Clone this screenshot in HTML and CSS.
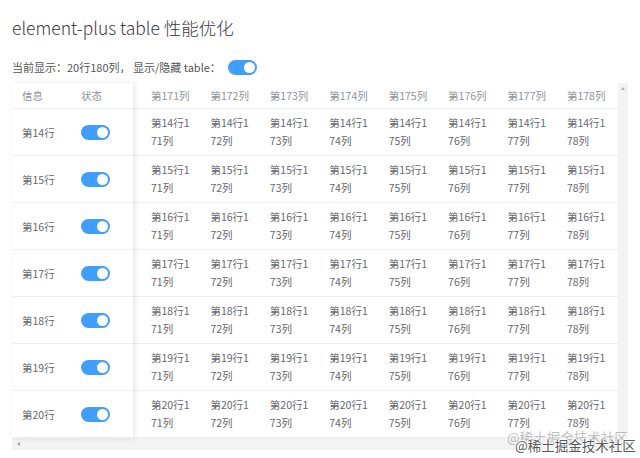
FILE: index.html
```html
<!DOCTYPE html>
<html lang="zh">
<head>
<meta charset="utf-8">
<title>element-plus table 性能优化</title>
<link rel="stylesheet" href="styles.css">
</head>
<body>
<div class="page">
  <h1 class="title">element-plus table 性能优化</h1>
  <div class="toolbar">
    <span>当前显示：20行180列， 显示/隐藏 table：</span>
    <span class="switch"><span class="knob"></span></span>
  </div>
  <div class="table">
    <div class="table-main">
      <div class="fixed">
        <div class="row head"><div class="cell c-info">信息</div><div class="cell c-state">状态</div></div>
        <div class="row body"><div class="cell c-info">第14行</div><div class="cell c-state"><span class="switch"><span class="knob"></span></span></div></div>
        <div class="row body"><div class="cell c-info">第15行</div><div class="cell c-state"><span class="switch"><span class="knob"></span></span></div></div>
        <div class="row body"><div class="cell c-info">第16行</div><div class="cell c-state"><span class="switch"><span class="knob"></span></span></div></div>
        <div class="row body"><div class="cell c-info">第17行</div><div class="cell c-state"><span class="switch"><span class="knob"></span></span></div></div>
        <div class="row body"><div class="cell c-info">第18行</div><div class="cell c-state"><span class="switch"><span class="knob"></span></span></div></div>
        <div class="row body"><div class="cell c-info">第19行</div><div class="cell c-state"><span class="switch"><span class="knob"></span></span></div></div>
        <div class="row body"><div class="cell c-info">第20行</div><div class="cell c-state"><span class="switch"><span class="knob"></span></span></div></div>
      </div>
      <div class="scroll">
        <div class="row head">
          <div class="cell col"><span class="txt">第171列</span></div>
          <div class="cell col"><span class="txt">第172列</span></div>
          <div class="cell col"><span class="txt">第173列</span></div>
          <div class="cell col"><span class="txt">第174列</span></div>
          <div class="cell col"><span class="txt">第175列</span></div>
          <div class="cell col"><span class="txt">第176列</span></div>
          <div class="cell col"><span class="txt">第177列</span></div>
          <div class="cell col"><span class="txt">第178列</span></div>
        </div>
        <div class="row body">
          <div class="cell col"><span class="txt">第14行171列</span></div>
          <div class="cell col"><span class="txt">第14行172列</span></div>
          <div class="cell col"><span class="txt">第14行173列</span></div>
          <div class="cell col"><span class="txt">第14行174列</span></div>
          <div class="cell col"><span class="txt">第14行175列</span></div>
          <div class="cell col"><span class="txt">第14行176列</span></div>
          <div class="cell col"><span class="txt">第14行177列</span></div>
          <div class="cell col"><span class="txt">第14行178列</span></div>
        </div>
        <div class="row body">
          <div class="cell col"><span class="txt">第15行171列</span></div>
          <div class="cell col"><span class="txt">第15行172列</span></div>
          <div class="cell col"><span class="txt">第15行173列</span></div>
          <div class="cell col"><span class="txt">第15行174列</span></div>
          <div class="cell col"><span class="txt">第15行175列</span></div>
          <div class="cell col"><span class="txt">第15行176列</span></div>
          <div class="cell col"><span class="txt">第15行177列</span></div>
          <div class="cell col"><span class="txt">第15行178列</span></div>
        </div>
        <div class="row body">
          <div class="cell col"><span class="txt">第16行171列</span></div>
          <div class="cell col"><span class="txt">第16行172列</span></div>
          <div class="cell col"><span class="txt">第16行173列</span></div>
          <div class="cell col"><span class="txt">第16行174列</span></div>
          <div class="cell col"><span class="txt">第16行175列</span></div>
          <div class="cell col"><span class="txt">第16行176列</span></div>
          <div class="cell col"><span class="txt">第16行177列</span></div>
          <div class="cell col"><span class="txt">第16行178列</span></div>
        </div>
        <div class="row body">
          <div class="cell col"><span class="txt">第17行171列</span></div>
          <div class="cell col"><span class="txt">第17行172列</span></div>
          <div class="cell col"><span class="txt">第17行173列</span></div>
          <div class="cell col"><span class="txt">第17行174列</span></div>
          <div class="cell col"><span class="txt">第17行175列</span></div>
          <div class="cell col"><span class="txt">第17行176列</span></div>
          <div class="cell col"><span class="txt">第17行177列</span></div>
          <div class="cell col"><span class="txt">第17行178列</span></div>
        </div>
        <div class="row body">
          <div class="cell col"><span class="txt">第18行171列</span></div>
          <div class="cell col"><span class="txt">第18行172列</span></div>
          <div class="cell col"><span class="txt">第18行173列</span></div>
          <div class="cell col"><span class="txt">第18行174列</span></div>
          <div class="cell col"><span class="txt">第18行175列</span></div>
          <div class="cell col"><span class="txt">第18行176列</span></div>
          <div class="cell col"><span class="txt">第18行177列</span></div>
          <div class="cell col"><span class="txt">第18行178列</span></div>
        </div>
        <div class="row body">
          <div class="cell col"><span class="txt">第19行171列</span></div>
          <div class="cell col"><span class="txt">第19行172列</span></div>
          <div class="cell col"><span class="txt">第19行173列</span></div>
          <div class="cell col"><span class="txt">第19行174列</span></div>
          <div class="cell col"><span class="txt">第19行175列</span></div>
          <div class="cell col"><span class="txt">第19行176列</span></div>
          <div class="cell col"><span class="txt">第19行177列</span></div>
          <div class="cell col"><span class="txt">第19行178列</span></div>
        </div>
        <div class="row body">
          <div class="cell col"><span class="txt">第20行171列</span></div>
          <div class="cell col"><span class="txt">第20行172列</span></div>
          <div class="cell col"><span class="txt">第20行173列</span></div>
          <div class="cell col"><span class="txt">第20行174列</span></div>
          <div class="cell col"><span class="txt">第20行175列</span></div>
          <div class="cell col"><span class="txt">第20行176列</span></div>
          <div class="cell col"><span class="txt">第20行177列</span></div>
          <div class="cell col"><span class="txt">第20行178列</span></div>
        </div>
      </div>
      <div class="vbar"><span class="arrow-up"></span></div>
    </div>
    <div class="hbar"><span class="arrow-left"></span></div>
  </div>
  <div class="watermark">@稀土掘金技术社区</div>
</div>
</body>
</html>
```

FILE: styles.css
```css
html, body {
  margin: 0;
  padding: 0;
  background: #ffffff;
}

body {
  font-family: "Noto Sans CJK SC", "Noto Sans", sans-serif;
  color: #606266;
}

.page {
  position: relative;
  width: 640px;
  height: 458px;
  overflow: hidden;
  padding-left: 12px;
  box-sizing: border-box;
}

.title {
  margin: 0;
  padding-top: 16px;
  font-size: 17.5px;
  line-height: 24px;
  font-weight: 300;
  color: #3c3c3c;
}

.toolbar {
  display: flex;
  align-items: center;
  margin-top: 19px;
  height: 16px;
  font-size: 11px;
  line-height: 16px;
  color: #555;
}

.toolbar .switch {
  margin-left: 7px;
}

.switch {
  display: inline-flex;
  align-items: center;
  justify-content: flex-end;
  width: 29px;
  height: 15px;
  border-radius: 8px;
  background: #409eff;
  padding: 0 2px;
  box-sizing: border-box;
}

.knob {
  width: 11px;
  height: 11px;
  border-radius: 50%;
  background: #ffffff;
}

.table {
  margin-top: 8px;
  width: 616px;
}

.table-main {
  display: flex;
}

.fixed {
  width: 121px;
  flex: none;
  position: relative;
  z-index: 1;
  background: #fff;
  box-shadow: 2px 0 6px rgba(0, 0, 0, 0.10);
}

.scroll {
  width: 485px;
  flex: none;
  overflow: hidden;
}

.row {
  display: flex;
  box-sizing: border-box;
  border-bottom: 1px solid #ebeef5;
}

.row.head {
  height: 26px;
  align-items: center;
  color: #909399;
  font-size: 10.5px;
}

.row.body {
  height: 47px;
  align-items: center;
  font-size: 10.5px;
  color: #66686c;
}

.cell {
  box-sizing: border-box;
  flex: none;
}

.c-info {
  width: 59px;
  padding-left: 10px;
}

.c-state {
  width: 62px;
  padding-left: 10px;
  display: flex;
  align-items: center;
}

.col {
  width: 59.43px;
  padding-left: 18px;
}

.txt {
  display: block;
  width: 42px;
  word-break: break-all;
  line-height: 18px;
}

.head .txt {
  width: auto;
  white-space: nowrap;
}

.vbar {
  width: 10px;
  flex: none;
  background: #f3f3f3;
  display: flex;
  justify-content: center;
  padding-top: 4px;
  box-sizing: border-box;
}

.arrow-up {
  width: 0;
  height: 0;
  border-left: 2.5px solid transparent;
  border-right: 2.5px solid transparent;
  border-bottom: 3px solid #b0b0b0;
}

.hbar {
  height: 12px;
  background: #f3f3f3;
  display: flex;
  align-items: center;
  padding-left: 5px;
}

.arrow-left {
  width: 0;
  height: 0;
  border-top: 2.5px solid transparent;
  border-bottom: 2.5px solid transparent;
  border-right: 3px solid #a0a0a0;
}

.watermark {
  position: absolute;
  left: 515px;
  top: 437px;
  font-size: 13.5px;
  line-height: 16px;
  white-space: nowrap;
  color: #5a5a5a;
  text-shadow: -1px 0 #fff, 1px 0 #fff, 0 -1px #fff, 0 1px #fff,
    -8px -8px 0 rgba(170, 170, 170, 0.75);
}
```
